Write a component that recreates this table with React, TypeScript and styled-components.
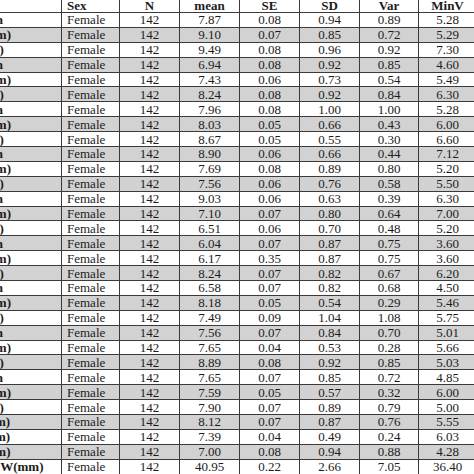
import { FC } from "react";
import styled, { createGlobalStyle } from "styled-components";

const GlobalStyle = createGlobalStyle`
  html, body {
    margin: 0;
    padding: 0;
    background: #ffffff;
  }
  body {
    overflow: hidden;
  }
`;

interface StatRow {
  label: string;
  mean: string;
  se: string;
  sd: string;
  v: string;
  min: string;
}

// stats per measurement, all female, N = 142
const raw: [string, string, string, string, string][] = [
  ["7.87", "0.08", "0.94", "0.89", "5.28"],
  ["9.10", "0.07", "0.85", "0.72", "5.29"],
  ["9.49", "0.08", "0.96", "0.92", "7.30"],
  ["6.94", "0.08", "0.92", "0.85", "4.60"],
  ["7.43", "0.06", "0.73", "0.54", "5.49"],
  ["8.24", "0.08", "0.92", "0.84", "6.30"],
  ["7.96", "0.08", "1.00", "1.00", "5.28"],
  ["8.03", "0.05", "0.66", "0.43", "6.00"],
  ["8.67", "0.05", "0.55", "0.30", "6.60"],
  ["8.90", "0.06", "0.66", "0.44", "7.12"],
  ["7.69", "0.08", "0.89", "0.80", "5.20"],
  ["7.56", "0.06", "0.76", "0.58", "5.50"],
  ["9.03", "0.06", "0.63", "0.39", "6.30"],
  ["7.10", "0.07", "0.80", "0.64", "7.00"],
  ["6.51", "0.06", "0.70", "0.48", "5.20"],
  ["6.04", "0.07", "0.87", "0.75", "3.60"],
  ["6.17", "0.35", "0.87", "0.75", "3.60"],
  ["8.24", "0.07", "0.82", "0.67", "6.20"],
  ["6.58", "0.07", "0.82", "0.68", "4.50"],
  ["8.18", "0.05", "0.54", "0.29", "5.46"],
  ["7.49", "0.09", "1.04", "1.08", "5.75"],
  ["7.56", "0.07", "0.84", "0.70", "5.01"],
  ["7.65", "0.04", "0.53", "0.28", "5.66"],
  ["8.89", "0.08", "0.92", "0.85", "5.03"],
  ["7.65", "0.07", "0.85", "0.72", "4.85"],
  ["7.59", "0.05", "0.57", "0.32", "6.00"],
  ["7.90", "0.07", "0.89", "0.79", "5.00"],
  ["8.12", "0.07", "0.87", "0.76", "5.55"],
  ["7.39", "0.04", "0.49", "0.24", "6.03"],
  ["7.00", "0.08", "0.94", "0.88", "4.28"],
  ["40.95", "0.22", "2.66", "7.05", "36.40"],
];

const labelFor = (i: number): string => {
  if (i === 27) return "Arch height(mm)";
  if (i === 28) return "Arch length(mm)";
  if (i === 29) return "Arch width (mm)";
  if (i === 30) return "Maxillary arch W(mm)";
  const tooth = `Tooth ${Math.floor(i / 3) + 1}: `;
  const kind = i % 3;
  if (kind === 0) return tooth + "Length";
  if (kind === 1) return tooth + "BL(mm)";
  return tooth + "H(mm)";
};

const rows: StatRow[] = raw.map(([mean, se, sd, v, min], i) => ({
  label: labelFor(i),
  mean,
  se,
  sd,
  v,
  min,
}));

const widths = [152, 58, 60, 60, 60, 60, 59, 58];

const Frame = styled.div`
  width: 474px;
  height: 474px;
  overflow: hidden;
  background: #ffffff;
`;

const Table = styled.table`
  border-collapse: collapse;
  table-layout: fixed;
  width: ${widths.reduce((a, b) => a + b, 0)}px;
  margin: -3px 0 0 -91px;
  font-family: "Liberation Serif", "Times New Roman", serif;
  font-size: 13px;
  color: #1c1c1c;
`;

const Col = styled.col<{ $w: number }>`
  width: ${(p) => p.$w}px;
`;

const HeadRow = styled.tr`
  height: 15px;
  background: #ffffff;
`;

const BodyRow = styled.tr<{ $shade: boolean }>`
  height: 14.9px;
  background: ${(p) => (p.$shade ? "#d2d2d2" : "#ffffff")};
`;

const HeadCell = styled.th<{ $left?: boolean }>`
  border: 1px solid #3a3a3a;
  padding: 0 0 0 ${(p) => (p.$left ? "5px" : "0")};
  font-weight: 700;
  text-align: ${(p) => (p.$left ? "left" : "center")};
  line-height: 13px;
  white-space: nowrap;
  overflow: hidden;
`;

const Cell = styled.td<{ $left?: boolean }>`
  border: 1px solid #3a3a3a;
  padding: 0 0 0 ${(p) => (p.$left ? "5px" : "0")};
  text-align: ${(p) => (p.$left ? "left" : "center")};
  line-height: 13px;
  white-space: nowrap;
  overflow: hidden;
`;

const LabelCell = styled.td`
  border: 1px solid #3a3a3a;
  padding: 0 0 0 4px;
  font-weight: 700;
  text-align: left;
  line-height: 13px;
  white-space: nowrap;
  overflow: hidden;
`;

const StatsTable: FC = () => (
  <Table>
    <colgroup>
      {widths.map((w, i) => (
        <Col key={i} $w={w} />
      ))}
    </colgroup>
    <thead>
      <HeadRow>
        <HeadCell $left>Character</HeadCell>
        <HeadCell $left>Sex</HeadCell>
        <HeadCell>N</HeadCell>
        <HeadCell>mean</HeadCell>
        <HeadCell>SE</HeadCell>
        <HeadCell>SD</HeadCell>
        <HeadCell>Var</HeadCell>
        <HeadCell>MinV</HeadCell>
      </HeadRow>
    </thead>
    <tbody>
      {rows.map((r, i) => (
        <BodyRow key={i} $shade={i % 2 === 1}>
          <LabelCell>{r.label}</LabelCell>
          <Cell $left>Female</Cell>
          <Cell>142</Cell>
          <Cell>{r.mean}</Cell>
          <Cell>{r.se}</Cell>
          <Cell>{r.sd}</Cell>
          <Cell>{r.v}</Cell>
          <Cell>{r.min}</Cell>
        </BodyRow>
      ))}
    </tbody>
  </Table>
);

export default function App() {
  return (
    <>
      <GlobalStyle />
      <Frame>
        <StatsTable />
      </Frame>
    </>
  );
}
